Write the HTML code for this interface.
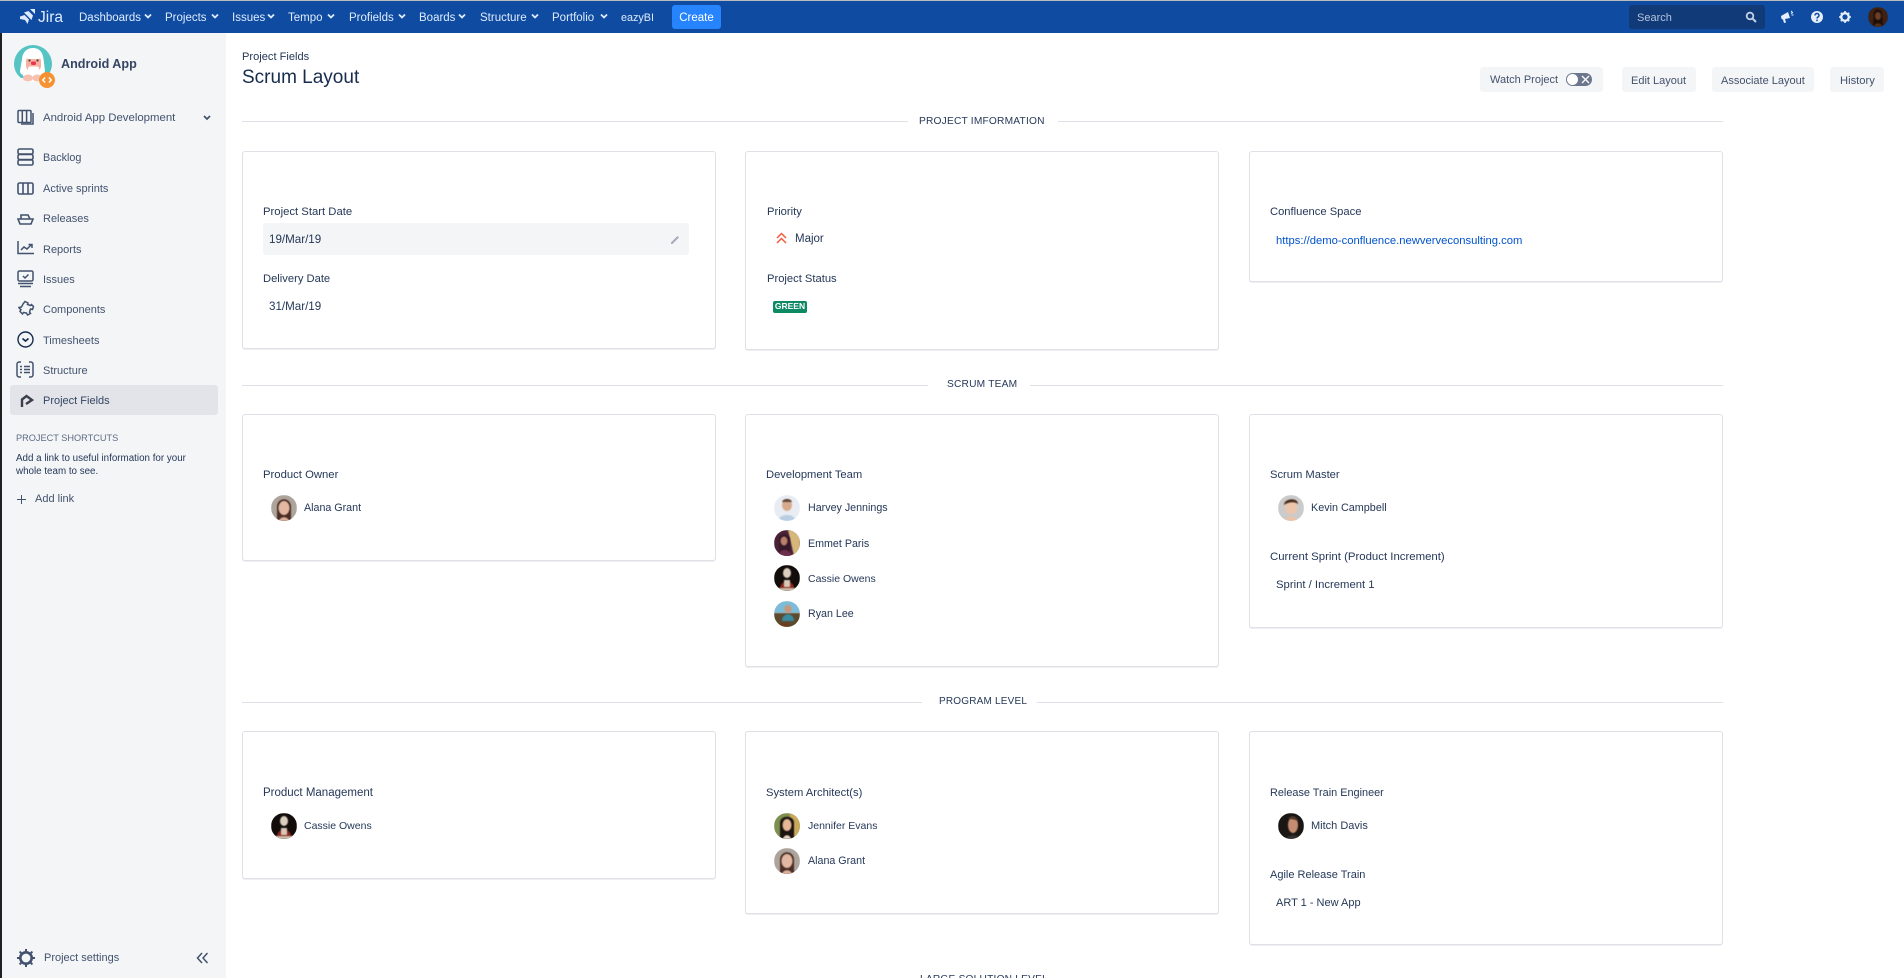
<!DOCTYPE html>
<html lang="en"><head><meta charset="utf-8"><title>Scrum Layout</title>
<style>
html,body{margin:0;padding:0;width:1904px;height:978px;overflow:hidden;background:#fff;font-family:"Liberation Sans",sans-serif;color:#172b4d}
body{position:relative}
*{box-sizing:border-box}
.t{position:absolute;white-space:nowrap;line-height:16px;font-size:11px;margin-top:1px}
.n{color:#deebff;font-size:11.5px;top:9px}
.s{color:#42526e;font-size:11px;left:43px}
.l{color:#253858;font-size:11.2px}
.v{color:#253858;font-size:10.7px}
.c{position:absolute;background:#fff;border:1px solid #dfe1e6;border-radius:3px;box-shadow:0 1px 0 #eeeff1}
.b{position:absolute;background:#f4f5f7;border-radius:3px;top:67px;height:25px}
.h{position:absolute;height:1px;background:#dfe1e6}
.sec{color:#253858;font-size:10.2px;letter-spacing:.2px;margin-top:0}
svg{position:absolute;display:block;overflow:hidden}
.a{border-radius:50%}
.a>*{filter:blur(.55px)}
</style></head><body>
<div style="position:absolute;left:0;top:0;width:1904px;height:33px;background:#0f4ca1"></div>
<div style="position:absolute;left:0;top:0;width:1904px;height:1px;background:#b9bbbe"></div>
<div style="position:absolute;left:0;top:33px;width:2px;height:945px;background:#202124"></div>
<div style="position:absolute;left:2px;top:33px;width:224px;height:945px;background:#f4f5f7"></div>

<!-- top nav -->
<svg style="left:18px;top:8px" width="18" height="18" viewBox="0 0 18 18" fill="#deebff"><path d="M12 1l5 0 0 5z"/><path d="M6 4.500l4.500-1.500 4.500 4.500-1.500 4.500z"/><path d="M2 8.500l4.500-1.500 4.500 4.500-1.500 4.500-2.500-4-5-1z"/></svg>
<span class="t" style="left:38px;top:8px;font-size:15.500px;color:#deebff;line-height:18px;font-weight:400">Jira</span>
<span class="t n" style="left:79px">Dashboards</span>
<span class="t n" style="left:165px">Projects</span>
<span class="t n" style="left:232px">Issues</span>
<span class="t n" style="left:288px">Tempo</span>
<span class="t n" style="left:349px">Profields</span>
<span class="t n" style="left:419px">Boards</span>
<span class="t n" style="left:480px">Structure</span>
<span class="t n" style="left:552px">Portfolio</span>
<span class="t n" style="left:621px;font-size:10.800px">eazyBI</span>
<svg style="left:144px;top:13px" width="8" height="6" viewBox="0 0 8 6"><path d="M1 1.500L4 4.500 7 1.500" fill="none" stroke="#deebff" stroke-width="1.800"/></svg>
<svg style="left:211px;top:13px" width="8" height="6" viewBox="0 0 8 6"><path d="M1 1.500L4 4.500 7 1.500" fill="none" stroke="#deebff" stroke-width="1.800"/></svg>
<svg style="left:267px;top:13px" width="8" height="6" viewBox="0 0 8 6"><path d="M1 1.500L4 4.500 7 1.500" fill="none" stroke="#deebff" stroke-width="1.800"/></svg>
<svg style="left:327px;top:13px" width="8" height="6" viewBox="0 0 8 6"><path d="M1 1.500L4 4.500 7 1.500" fill="none" stroke="#deebff" stroke-width="1.800"/></svg>
<svg style="left:398px;top:13px" width="8" height="6" viewBox="0 0 8 6"><path d="M1 1.500L4 4.500 7 1.500" fill="none" stroke="#deebff" stroke-width="1.800"/></svg>
<svg style="left:458px;top:13px" width="8" height="6" viewBox="0 0 8 6"><path d="M1 1.500L4 4.500 7 1.500" fill="none" stroke="#deebff" stroke-width="1.800"/></svg>
<svg style="left:531px;top:13px" width="8" height="6" viewBox="0 0 8 6"><path d="M1 1.500L4 4.500 7 1.500" fill="none" stroke="#deebff" stroke-width="1.800"/></svg>
<svg style="left:600px;top:13px" width="8" height="6" viewBox="0 0 8 6"><path d="M1 1.500L4 4.500 7 1.500" fill="none" stroke="#deebff" stroke-width="1.800"/></svg>
<div style="position:absolute;left:672px;top:5px;width:49px;height:24px;background:#2684ff;border-radius:3px;color:#fff;font-size:11.5px;line-height:26px;text-align:center">Create</div>
<div style="position:absolute;left:1629px;top:5px;width:136px;height:24px;background:#103a78;border-radius:3px"></div>
<span class="t" style="left:1637px;top:9px;color:#b3c4de;font-size:11px">Search</span>
<svg style="left:1745px;top:11px" width="12" height="12" viewBox="0 0 12 12"><circle cx="5" cy="5" r="3.300" fill="none" stroke="#c1cfe4" stroke-width="1.800"/><path d="M7.500 7.500L11 11" stroke="#c1cfe4" stroke-width="2"/></svg>
<svg style="left:1781px;top:10px" width="13" height="13" viewBox="0 0 13 13" fill="#e6effa"><path d="M0 6l7-4 2 6-5 1 1 3.500-2 .5-1-3.500-1.500-.5z"/><path d="M10 1l1.500 1.500M10.500 5h2M10 3.500l2-1" stroke="#e6effa" fill="none"/></svg>
<svg style="left:1811px;top:11px" width="12" height="12" viewBox="0 0 12 12"><circle cx="6" cy="6" r="6" fill="#e6effa"/><path d="M4 4.500c0-2.700 4-2.700 4 0 0 1.500-2 1.500-2 3" fill="none" stroke="#0f4ca1" stroke-width="1.500"/><rect x="5.200" y="8.600" width="1.600" height="1.600" fill="#0f4ca1"/></svg>
<svg style="left:1839px;top:11px" width="12" height="12" viewBox="0 0 12 12"><circle cx="6" cy="6" r="3.800" fill="none" stroke="#e6effa" stroke-width="2.400"/><path d="M6 0v2.500M6 9.500V12M0 6h2.500M9.500 6H12M1.800 1.800l1.800 1.800M8.400 8.400l1.800 1.800M1.800 10.200l1.800-1.800M8.400 3.600l1.800-1.800" stroke="#e6effa" stroke-width="1.600"/></svg>
<svg class="a" style="left:1868px;top:7px" width="20" height="20" viewBox="0 0 20 20"><rect width="20" height="20" fill="#3f2214"/><path d="M6 5c2-4 7-3 8 1l1 14H5z" fill="#1c0e08"/><ellipse cx="10" cy="9" rx="3" ry="4" fill="#6e3f26"/><path d="M6 20c0-5 8-5 8 0z" fill="#52301d"/></svg>

<!-- sidebar head -->
<svg style="left:14px;top:45px" width="40" height="40" viewBox="0 0 40 40"><path d="M19 0a19 19 0 0 1 19 19c0 6-3 11-7 14H7C3 30 0 25 0 19A19 19 0 0 1 19 0z" fill="#57c4c4"/><path d="M19 3c6 0 10 4 10.500 11l1.500 12c0 2-1 3-3 4l-2 7H11l-2-7c-2-1-3-2-3-4l2-12C8.500 7 13 3 19 3z" fill="#fff"/><rect x="12" y="11" width="15" height="15" rx="5" fill="#f7b0a2"/><rect x="12" y="9" width="15" height="5" rx="2.500" fill="#fff"/><rect x="14.500" y="14.500" width="2" height="2" fill="#5a3a3a"/><rect x="22.500" y="14.500" width="2" height="2" fill="#5a3a3a"/><rect x="17" y="16.500" width="5" height="3.500" rx="1.500" fill="#e8364a"/><rect x="14" y="21.500" width="11" height="4.500" rx="2" fill="#fff"/><ellipse cx="14" cy="33" rx="5" ry="3.500" fill="#f7c1b2"/><ellipse cx="23" cy="33" rx="4.500" ry="3.500" fill="#f7c1b2"/></svg>
<svg style="left:38px;top:71px" width="18" height="18" viewBox="0 0 18 18"><circle cx="9" cy="9" r="8" fill="#f79232"/><path d="M7 6.500L4.800 9 7 11.500M11 6.500L13.200 9 11 11.500" fill="none" stroke="#fff" stroke-width="1.500"/></svg>
<span class="t" style="left:61px;top:55px;font-size:12.600px;font-weight:700;color:#344563">Android App</span>
<svg style="left:17px;top:109px" width="17" height="17" viewBox="0 0 17 17" fill="none" stroke="#42526e" stroke-width="1.500"><rect x="1" y="1.500" width="13" height="12" rx="1"/><path d="M5.300 1.500v12M9.600 1.500v12M16 4v11H4"/></svg>
<span class="t s" style="top:109px;font-size:11.400px">Android App Development</span>
<svg style="left:203px;top:115px" width="8" height="6" viewBox="0 0 8 6"><path d="M1 1L4 4 7 1" fill="none" stroke="#42526e" stroke-width="1.700"/></svg>

<!-- sidebar menu -->
<svg style="left:17px;top:148px" width="17" height="18" viewBox="0 0 17 18" fill="none" stroke="#42526e" stroke-width="1.600"><rect x="1" y="1" width="15" height="5" rx="1.500"/><rect x="1" y="6.500" width="15" height="5" rx="1.500"/><rect x="1" y="12" width="15" height="5" rx="1.500"/></svg>
<span class="t s" style="top:149px;font-size:10.800px">Backlog</span>
<svg style="left:17px;top:182px" width="17" height="13" viewBox="0 0 17 13" fill="none" stroke="#42526e" stroke-width="1.600"><rect x="1" y="1" width="15" height="11" rx="1.500"/><path d="M6 1v11M11 1v11"/></svg>
<span class="t s" style="top:180px">Active sprints</span>
<svg style="left:17px;top:212px" width="17" height="13" viewBox="0 0 17 13" fill="none" stroke="#42526e" stroke-width="1.600"><path d="M1 7h15l-2 5H3zM4 7V3h7l2 4"/></svg>
<span class="t s" style="top:210px">Releases</span>
<svg style="left:17px;top:241px" width="17" height="14" viewBox="0 0 17 14" fill="none" stroke="#42526e" stroke-width="1.500"><path d="M1 0v12.500h16M4 9l3-3 3 2 4-4M11.500 3.500H15V7"/></svg>
<span class="t s" style="top:241px">Reports</span>
<svg style="left:17px;top:270px" width="17" height="18" viewBox="0 0 17 18" fill="none" stroke="#42526e" stroke-width="1.500"><rect x="1" y="1" width="15" height="10" rx="1.500"/><path d="M6 6l2 2 3.500-3.500M1 13.500h15M3 16.500h11"/></svg>
<span class="t s" style="top:271px">Issues</span>
<svg style="left:18px;top:300px" width="17" height="17" viewBox="0 0 17 17" fill="none" stroke="#42526e" stroke-width="1.500"><path d="M7 1.500l3 1.500-.5 1.500 3 1 1-1 2 2-1 3-2-.5-1 3 1 1.500-3 1.500-1-2-3-.5-1 1.500-2.500-2.500 1-2-1.500-1L1 7.500l2.500-.5L5 4z"/></svg>
<span class="t s" style="top:301px">Components</span>
<svg style="left:17px;top:331px" width="17" height="17" viewBox="0 0 17 17" fill="none" stroke="#172b4d" stroke-width="1.400"><circle cx="8.500" cy="8.500" r="7.500"/><path d="M5.500 7.500l3 2.500 3-2.500" stroke-width="1.700"/></svg>
<span class="t s" style="top:332px">Timesheets</span>
<svg style="left:16px;top:361px" width="18" height="17" viewBox="0 0 18 17" fill="none" stroke="#42526e" stroke-width="1.500"><path d="M5 1H3C2 1 1 2 1 3v11c0 1 1 2 2 2h2M13 1h2c1 0 2 1 2 2v11c0 1-1 2-2 2h-2M4 5.500h2M8 5.500h6M4 8.500h2M8 8.500h6M4 11.500h2M8 11.500h6"/></svg>
<span class="t s" style="top:362px">Structure</span>
<div style="position:absolute;left:10px;top:385px;width:208px;height:30px;background:#e2e4e9;border-radius:3px"></div>
<svg style="left:19px;top:394px" width="15" height="14" viewBox="0 0 15 14" fill="none" stroke="#3a3f4a" stroke-width="2.400"><path d="M3 13V5.500L7.500 2 13 6 7 10"/></svg>
<span class="t s" style="top:392px;color:#344563">Project Fields</span>
<span class="t" style="left:16px;top:429px;font-size:9.200px;color:#5e6c84">PROJECT SHORTCUTS</span>
<span class="t" style="left:16px;top:450px;font-size:9.800px;color:#253858">Add a link to useful information for your</span>
<span class="t" style="left:16px;top:463px;font-size:9.800px;color:#253858">whole team to see.</span>
<svg style="left:17px;top:495px" width="9" height="9" viewBox="0 0 9 9"><path d="M4.500 0v9M0 4.500h9" stroke="#42526e" stroke-width="1"/></svg>
<span class="t s" style="left:35px;top:490px">Add link</span>
<svg style="left:17px;top:949px" width="18" height="18" viewBox="0 0 18 18"><circle cx="9" cy="9" r="5.700" fill="none" stroke="#42526e" stroke-width="2.600"/><path d="M9 0v3M9 15v3M0 9h3M15 9h3M2.600 2.600l2.200 2.200M13.200 13.200l2.200 2.200M2.600 15.400l2.200-2.200M13.200 4.800l2.200-2.200" stroke="#42526e" stroke-width="2"/></svg>
<span class="t s" style="left:44px;top:949px">Project settings</span>
<svg style="left:196px;top:952px" width="13" height="12" viewBox="0 0 13 12" fill="none" stroke="#42526e" stroke-width="1.500"><path d="M6 1L1.500 6 6 11M11.500 1L7 6l4.500 5"/></svg>

<!-- header -->
<span class="t" style="left:242px;top:48px;color:#253858;font-size:11.100px">Project Fields</span>
<span class="t" style="left:242px;top:65px;line-height:26px;font-size:19px;color:#172b4d;margin-top:0">Scrum Layout</span>
<div class="b" style="left:1480px;width:123px"></div>
<span class="t" style="left:1490px;top:71px;color:#42526e;font-size:11px">Watch Project</span>
<div style="position:absolute;left:1566px;top:73px;width:26px;height:13px;border-radius:7px;background:#6b778c"></div>
<div style="position:absolute;left:1567px;top:74px;width:11px;height:11px;border-radius:50%;background:#fff"></div>
<svg style="left:1581px;top:75px" width="9" height="9" viewBox="0 0 9 9"><path d="M1 1l7 7M8 1L1 8" stroke="#fff" stroke-width="1.300"/></svg>
<div class="b" style="left:1622px;width:74px"></div><span class="t" style="left:1631px;top:72px;color:#42526e;font-size:11px">Edit Layout</span>
<div class="b" style="left:1712px;width:102px"></div><span class="t" style="left:1721px;top:72px;color:#42526e;font-size:11px">Associate Layout</span>
<div class="b" style="left:1830px;width:54px"></div><span class="t" style="left:1840px;top:72px;color:#42526e;font-size:11.200px">History</span>

<!-- section lines -->
<div class="h" style="left:242px;top:121px;width:666px"></div><div class="h" style="left:1058px;top:121px;width:665px"></div>
<span class="t sec" style="left:919px;top:114px">PROJECT IMFORMATION</span>
<div class="h" style="left:242px;top:385px;width:686px"></div><div class="h" style="left:1030px;top:385px;width:693px"></div>
<span class="t sec" style="left:947px;top:377px">SCRUM TEAM</span>
<div class="h" style="left:242px;top:702px;width:680px"></div><div class="h" style="left:1037px;top:702px;width:686px"></div>
<span class="t sec" style="left:939px;top:694px;font-size:10px">PROGRAM LEVEL</span>
<span class="t sec" style="left:920px;top:972px">LARGE SOLUTION LEVEL</span>

<!-- cards -->
<div class="c" style="left:242px;top:151px;width:474px;height:198px"></div>
<div class="c" style="left:745px;top:151px;width:474px;height:199px"></div>
<div class="c" style="left:1249px;top:151px;width:474px;height:131px"></div>
<div class="c" style="left:242px;top:414px;width:474px;height:147px"></div>
<div class="c" style="left:745px;top:414px;width:474px;height:253px"></div>
<div class="c" style="left:1249px;top:414px;width:474px;height:214px"></div>
<div class="c" style="left:242px;top:731px;width:474px;height:148px"></div>
<div class="c" style="left:745px;top:731px;width:474px;height:183px"></div>
<div class="c" style="left:1249px;top:731px;width:474px;height:214px"></div>

<!-- row 1 -->
<span class="t l" style="left:263px;top:203px;font-size:11.300px">Project Start Date</span>
<div style="position:absolute;left:263px;top:223px;width:426px;height:32px;background:#f4f5f7;border-radius:3px"></div>
<span class="t v" style="left:269px;top:231px;font-size:11.600px">19/Mar/19</span>
<svg style="left:670px;top:234px" width="11" height="11" viewBox="0 0 11 11"><path d="M1 8.500L7.500 2l1.500 1.500L2.500 10H1z" fill="#a5adba"/></svg>
<span class="t l" style="left:263px;top:270px">Delivery Date</span>
<span class="t v" style="left:269px;top:298px;font-size:11.600px">31/Mar/19</span>
<span class="t l" style="left:767px;top:203px">Priority</span>
<svg style="left:776px;top:232px" width="11" height="12" viewBox="0 0 11 12" fill="none" stroke="#f15c3c" stroke-width="1.500"><path d="M1 6l4.500-4.500L10 6M1 11l4.500-4.500L10 11"/></svg>
<span class="t v" style="left:795px;top:230px;font-size:11.500px">Major</span>
<span class="t l" style="left:767px;top:270px">Project Status</span>
<div style="position:absolute;left:773px;top:301px;width:34px;height:12px;background:#0d8a63;border-radius:2px;color:#fff;font-size:8.500px;font-weight:700;line-height:11px;text-align:center">GREEN</div>
<span class="t l" style="left:1270px;top:203px">Confluence Space</span>
<span class="t v" style="left:1276px;top:232px;color:#0052cc;font-size:11.250px">https://demo-confluence.newverveconsulting.com</span>

<!-- row 2 -->
<span class="t l" style="left:263px;top:466px;font-size:11.300px">Product Owner</span>
<svg class="a" style="left:271px;top:495px" width="26" height="26" viewBox="0 0 26 26"><rect width="26" height="26" fill="#ada49c"/><path d="M6 26V11C7 2 19 2 20 11v15z" fill="#4a2d26"/><ellipse cx="13" cy="13" rx="5.500" ry="7" fill="#e3b8a2"/><path d="M8 26c1-5 9-5 10 0z" fill="#dcb09a"/></svg>
<span class="t v" style="left:304px;top:499px">Alana Grant</span>
<span class="t l" style="left:766px;top:466px">Development Team</span>
<svg class="a" style="left:774px;top:495px" width="26" height="26" viewBox="0 0 26 26"><rect width="26" height="26" fill="#e9edf3"/><ellipse cx="13" cy="10" rx="5" ry="6" fill="#d8a98c"/><path d="M8 7c1-4 9-4 10 0z" fill="#5f4a3c"/><path d="M4 26c1-8 17-8 18 0z" fill="#b9cee2"/></svg>
<span class="t v" style="left:808px;top:499px">Harvey Jennings</span>
<svg class="a" style="left:774px;top:530px" width="26" height="26" viewBox="0 0 26 26"><rect width="26" height="26" fill="#4a2238"/><path d="M14 0h12v26H20z" fill="#d7b67a"/><path d="M5 26V9c1-6 10-6 11 0v17z" fill="#35182a"/><ellipse cx="10" cy="11" rx="3.500" ry="4.500" fill="#b8806a"/><path d="M4 26c1-8 12-8 14 0z" fill="#6b2f4a"/></svg>
<span class="t v" style="left:808px;top:535px">Emmet Paris</span>
<svg class="a" style="left:774px;top:565px" width="26" height="26" viewBox="0 0 26 26"><rect width="26" height="26" fill="#120c0a"/><ellipse cx="13" cy="8" rx="4" ry="5" fill="#dccfc0"/><path d="M6 24c0-10 14-10 14 0z" fill="#8f2a20"/><rect x="10" y="15" width="6" height="7" fill="#d8c8b8"/><rect y="23" width="26" height="3" fill="#c9bda8"/></svg>
<span class="t v" style="left:808px;top:570px;font-size:10.500px">Cassie Owens</span>
<svg class="a" style="left:774px;top:601px" width="26" height="26" viewBox="0 0 26 26"><rect width="26" height="12" fill="#7dbcd8"/><rect y="12" width="26" height="14" fill="#5b4a2e"/><ellipse cx="14" cy="8" rx="3.500" ry="4" fill="#c99878"/><path d="M8 20c0-9 12-9 12 0z" fill="#3a8ba0"/><path d="M6 26c0-6 9-6 10 0z" fill="#6e3b1c"/></svg>
<span class="t v" style="left:808px;top:605px">Ryan Lee</span>
<span class="t l" style="left:1270px;top:466px">Scrum Master</span>
<svg class="a" style="left:1278px;top:495px" width="26" height="26" viewBox="0 0 26 26"><rect width="26" height="26" fill="#cbcbcb"/><ellipse cx="13" cy="12" rx="6" ry="7.500" fill="#ecc6ab"/><path d="M6 10C6 3 20 2 20 9c-4-3-10-2-14 1z" fill="#4a3020"/><path d="M7 26c1-6 11-6 12 0z" fill="#eac4a8"/></svg>
<span class="t v" style="left:1311px;top:499px;font-size:10.800px">Kevin Campbell</span>
<span class="t l" style="left:1270px;top:548px;font-size:11.400px">Current Sprint (Product Increment)</span>
<span class="t v" style="left:1276px;top:576px;font-size:11.300px">Sprint / Increment 1</span>

<!-- row 3 -->
<span class="t l" style="left:263px;top:784px;font-size:11.500px">Product Management</span>
<svg class="a" style="left:271px;top:813px" width="26" height="26" viewBox="0 0 26 26"><rect width="26" height="26" fill="#120c0a"/><ellipse cx="13" cy="8" rx="4" ry="5" fill="#dccfc0"/><path d="M6 24c0-10 14-10 14 0z" fill="#8f2a20"/><rect x="10" y="15" width="6" height="7" fill="#d8c8b8"/><rect y="23" width="26" height="3" fill="#c9bda8"/></svg>
<span class="t v" style="left:304px;top:817px;font-size:10.500px">Cassie Owens</span>
<span class="t l" style="left:766px;top:784px">System Architect(s)</span>
<svg class="a" style="left:774px;top:813px" width="26" height="26" viewBox="0 0 26 26"><rect width="26" height="26" fill="#7f8f50"/><rect x="16" width="10" height="26" fill="#c9a95c"/><path d="M6 26V9c1-7 13-7 14 0v17z" fill="#1c1410"/><ellipse cx="13" cy="12" rx="4.500" ry="6" fill="#e6b898"/><path d="M9 26c1-5 7-5 8 0z" fill="#e6d4c4"/></svg>
<span class="t v" style="left:808px;top:817px;font-size:10.500px">Jennifer Evans</span>
<svg class="a" style="left:774px;top:848px" width="26" height="26" viewBox="0 0 26 26"><rect width="26" height="26" fill="#ada49c"/><path d="M6 26V11C7 2 19 2 20 11v15z" fill="#4a2d26"/><ellipse cx="13" cy="13" rx="5.500" ry="7" fill="#e3b8a2"/><path d="M8 26c1-5 9-5 10 0z" fill="#dcb09a"/></svg>
<span class="t v" style="left:808px;top:852px">Alana Grant</span>
<span class="t l" style="left:1270px;top:784px;font-size:10.900px">Release Train Engineer</span>
<svg class="a" style="left:1278px;top:813px" width="26" height="26" viewBox="0 0 26 26"><rect width="26" height="26" fill="#1a1614"/><ellipse cx="15" cy="12" rx="5" ry="8" fill="#c48c70"/><path d="M10 6c2-4 9-3 10 2-4-2-7-2-10-2z" fill="#4a3428"/><path d="M8 26c2-5 12-5 14 0z" fill="#33312f"/></svg>
<span class="t v" style="left:1311px;top:817px;font-size:11px">Mitch Davis</span>
<span class="t l" style="left:1270px;top:866px;font-size:11px">Agile Release Train</span>
<span class="t v" style="left:1276px;top:894px;font-size:11px">ART 1 - New App</span>
</body></html>
